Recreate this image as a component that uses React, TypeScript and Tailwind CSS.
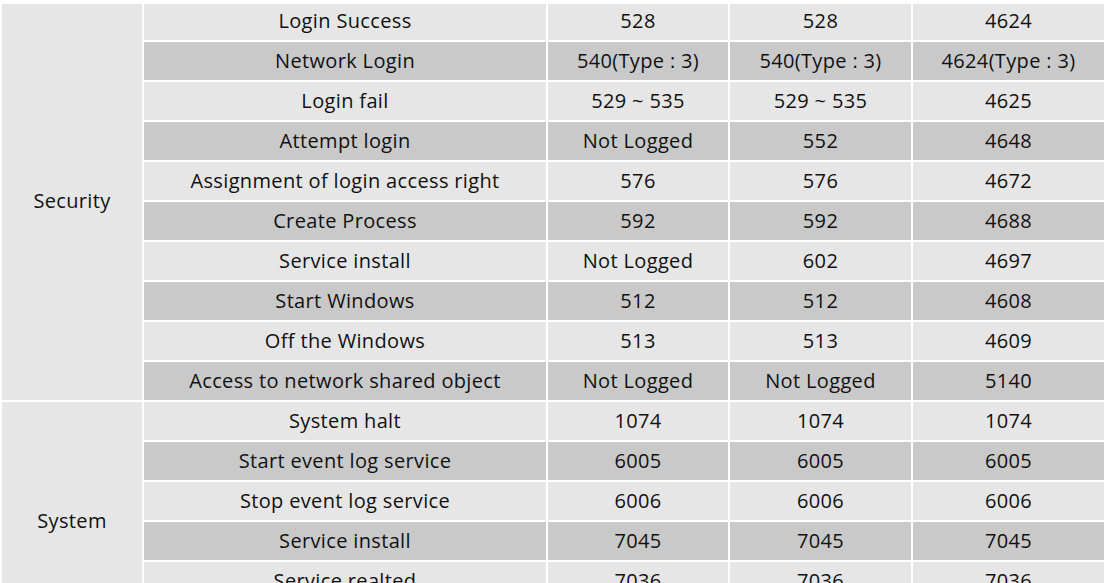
const security = [
    ['Login Success', '528', '528', '4624'],
    ['Network Login', '540(Type : 3)', '540(Type : 3)', '4624(Type : 3)'],
    ['Login fail', '529 ~ 535', '529 ~ 535', '4625'],
    ['Attempt login', 'Not Logged', '552', '4648'],
    ['Assignment of login access right', '576', '576', '4672'],
    ['Create Process', '592', '592', '4688'],
    ['Service install', 'Not Logged', '602', '4697'],
    ['Start Windows', '512', '512', '4608'],
    ['Off the Windows', '513', '513', '4609'],
    ['Access to network shared object', 'Not Logged', 'Not Logged', '5140'],
];

const system = [
    ['System halt', '1074', '1074', '1074'],
    ['Start event log service', '6005', '6005', '6005'],
    ['Stop event log service', '6006', '6006', '6006'],
    ['Service install', '7045', '7045', '7045'],
    ['Service realted', '7036', '7036', '7036'],
    ['', '', '', ''],
];

const rows = [...security, ...system];

export default function App() {
    return (
        <div className="h-[583px] w-[1110px] overflow-hidden bg-white">
            <div
                className="grid grid-cols-[140px_402px_180px_181px_191px] grid-rows-[36px_repeat(15,38px)] gap-[2px] pl-[2px] pt-[4px] text-[20px] tracking-[0.35px] text-[#111]"
                style={{ fontFamily: '"Open Sans", "Noto Sans CJK KR", sans-serif' }}
            >
                {/* group labels */}
                <div className="row-start-1 row-end-11 col-start-1 flex items-center justify-center bg-[#e6e6e6] pb-[3px]">
                    Security
                </div>
                <div className="row-start-11 row-end-17 col-start-1 flex items-center justify-center bg-[#e6e6e6]">
                    System
                </div>

                {rows.map((row, i) =>
                    row.map((cell, j) => (
                        <div
                            key={`${i}-${j}`}
                            className={`flex items-center justify-center whitespace-nowrap ${
                                i % 2 === 0 ? 'bg-[#e6e6e6]' : 'bg-[#c9c9c9]'
                            } ${i === 0 ? 'pb-[3px]' : ''}`}
                            style={{ gridRow: i + 1, gridColumn: j + 2 }}
                        >
                            {cell}
                        </div>
                    ))
                )}
            </div>
        </div>
    );
}
